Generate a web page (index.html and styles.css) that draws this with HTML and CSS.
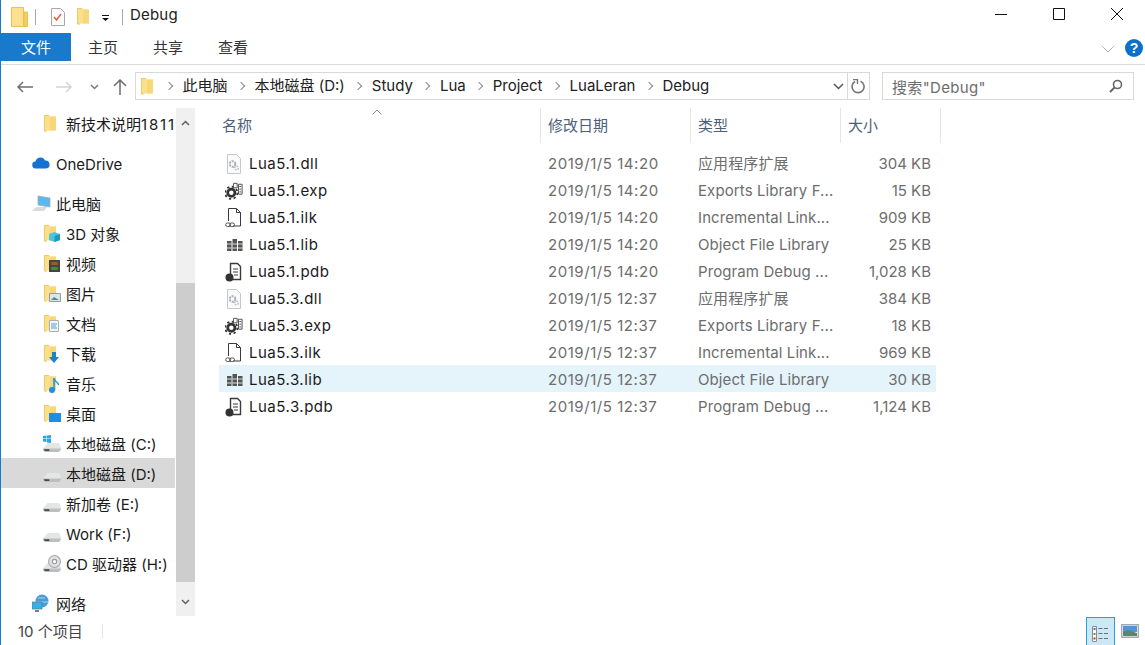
FILE: index.html
```html
<!DOCTYPE html>
<html lang="zh-CN">
<head>
<meta charset="utf-8">
<title>Debug</title>
<link rel="stylesheet" href="styles.css">
</head>
<body>
<svg class="defs" width="0" height="0" aria-hidden="true">
  <defs>
    <symbol id="folder" viewBox="0 0 12 17">
      <path d="M0 0h5l1 1.500h6v14H2.500L0 16z" fill="#fbdf8c"/>
      <path d="M6 1.500h6v14H6z" fill="#f8d67a"/>
      <path d="M0 .5h5M.5 0v15.500" stroke="#eecb6a" fill="none"/>
      <path d="M0 16l2.500 1V15.500L0 15z" fill="#e9c25c"/>
    </symbol>
    <symbol id="drive" viewBox="0 0 20 12">
      <path d="M5 1h13l2 5-2 4H2l-2-3z" fill="#e4e6e6"/>
      <path d="M0 7h20v1L18 11H2L0 9z" fill="#bdbfbf"/>
      <path d="M1 8h6v2H2z" fill="#3f4a4d"/>
    </symbol>
    <symbol id="dll" viewBox="0 0 18 20">
      <path d="M2.500.5h9l4 4v15h-13z" fill="#fafafa" stroke="#c4c8cc"/>
      <circle cx="7.500" cy="10" r="2.800" fill="none" stroke="#a8aeb4" stroke-width="2" stroke-dasharray="2 1"/>
      <circle cx="11.500" cy="14" r="1.800" fill="none" stroke="#b8bcc2" stroke-width="1.500" stroke-dasharray="1.500 1"/>
    </symbol>
    <symbol id="exp" viewBox="0 0 20 20">
      <circle cx="7" cy="12" r="4" fill="none" stroke="#333" stroke-width="3"/>
      <circle cx="7" cy="12" r="6.800" fill="none" stroke="#333" stroke-width="2" stroke-dasharray="2.500 2.800"/>
      <path d="M9.500 1.500h4v5h-4zM15 2.500h4v11h-4z" fill="#fff" stroke="#444"/>
      <path d="M16 5h2M16 8h2M16 11h2" stroke="#444"/>
    </symbol>
    <symbol id="ilk" viewBox="0 0 18 20">
      <path d="M3.500 13V.5h8l4 4v13.500H8" fill="#fff" stroke="#3b3b3b"/>
      <path d="M11.500.5v4h4" fill="none" stroke="#3b3b3b"/>
      <rect x=".7" y="15" width="5" height="3.500" rx="1.700" fill="none" stroke="#555"/>
      <rect x="4.500" y="15" width="5" height="3.500" rx="1.700" fill="none" stroke="#555"/>
    </symbol>
    <symbol id="lib" viewBox="0 0 18 14">
      <path d="M2 3h4.500v10H2zM7.500 1H12v12H7.500zM13 3h4.500v10H13z" fill="#555"/>
      <path d="M2 6h4.500M7.500 6H12M13 6h4.500M2 10h4.500M7.500 10H12M13 10h4.500" stroke="#ddd"/>
    </symbol>
    <symbol id="pdb" viewBox="0 0 18 20">
      <path d="M5.500 1.500h7l3 3v13h-10z" fill="#fff" stroke="#3b3b3b" stroke-width="1.400"/>
      <path d="M8 7h5M8 10h5M9 13h4" stroke="#3b3b3b"/>
      <circle cx="4.500" cy="15.500" r="4" fill="#333"/>
    </symbol>
  </defs>
</svg>
<div class="window">
  <header class="titlebar">
    <svg class="qa-folder" width="17" height="20" viewBox="0 0 17 20"><path d="M.5.500h12v19H.5z" fill="#fbe08f" stroke="#e9c14f"/><path d="M13 5h3.500v14.500H13z" fill="#f4cd66" stroke="#e9c14f"/></svg>
    <span class="qa-sep"></span>
    <svg class="qa-check" width="14" height="18" viewBox="0 0 14 18"><path d="M.5.500h9l4 4v13h-13z" fill="#fdfdfd" stroke="#a8a8a8"/><path d="M3 9l2.500 3L10 6" fill="none" stroke="#e8603c" stroke-width="1.500"/></svg>
    <svg class="qa-small" width="12" height="17"><use href="#folder"/></svg>
    <svg class="qa-drop" width="7" height="6" viewBox="0 0 7 6"><path d="M0 0h7v1H0zM0 3h7L3.500 6z" fill="#111"/></svg>
    <span class="qa-sep qa-sep-second"></span>
    <span class="title">Debug</span>
    <div class="controls">
      <svg width="14" height="14" viewBox="0 0 14 14"><path d="M1 7.500h12" stroke="#111"/></svg>
      <svg width="14" height="14" viewBox="0 0 14 14"><path d="M1.500 1.500h11v11h-11z" fill="none" stroke="#111"/></svg>
      <svg width="14" height="14" viewBox="0 0 14 14"><path d="M1 1l12 12M13 1L1 13" stroke="#111" fill="none"/></svg>
    </div>
  </header>
  <nav class="tabs">
    <span class="tab tab-file">文件</span>
    <span class="tab">主页</span>
    <span class="tab">共享</span>
    <span class="tab">查看</span>
    <svg class="ribbon-toggle" width="14" height="8" viewBox="0 0 14 8"><path d="M1 1l6 6 6-6" fill="none" stroke="#b4b8bd"/></svg>
    <svg class="help" width="18" height="18" viewBox="0 0 18 18"><circle cx="9" cy="9" r="9" fill="#0c6fc9"/><text x="9" y="14" text-anchor="middle" class="help-text">?</text></svg>
  </nav>
  <div class="navbar">
    <svg class="nav-icon nav-back" width="16" height="12" viewBox="0 0 16 12"><path d="M6 1L1 6l5 5M1 6h15" fill="none" stroke="#6e6e6e" stroke-width="1.500"/></svg>
    <svg class="nav-icon nav-forward" width="16" height="12" viewBox="0 0 16 12"><path d="M10 1l5 5-5 5M15 6H0" fill="none" stroke="#d3d3d3" stroke-width="1.500"/></svg>
    <svg class="nav-icon nav-down" width="9" height="6" viewBox="0 0 9 6"><path d="M1 1l3.500 3.500L8 1" fill="none" stroke="#7b7b7b" stroke-width="1.500"/></svg>
    <svg class="nav-icon nav-up" width="14" height="16" viewBox="0 0 14 16"><path d="M1 7l6-6 6 6M7 1v15" fill="none" stroke="#6e6e6e" stroke-width="1.500"/></svg>
    <div class="address">
      <svg class="addr-folder" width="12" height="17"><use href="#folder"/></svg>
      <div class="crumbs">
        <span class="chev"></span><span>此电脑</span>
        <span class="chev"></span><span>本地磁盘 (D:)</span>
        <span class="chev"></span><span>Study</span>
        <span class="chev"></span><span>Lua</span>
        <span class="chev"></span><span>Project</span>
        <span class="chev"></span><span>LuaLeran</span>
        <span class="chev"></span><span>Debug</span>
      </div>
      <svg class="addr-drop" width="11" height="7" viewBox="0 0 11 7"><path d="M1 1l4.500 4.500L10 1" fill="none" stroke="#555" stroke-width="1.500"/></svg>
      <div class="refresh">
        <svg width="15" height="15" viewBox="0 0 15 15"><path d="M9.500 2.200A6 6 0 1 1 4 2.500" fill="none" stroke="#777" stroke-width="1.600"/><path d="M2 .5h4.500V5" fill="none" stroke="#777" stroke-width="1.400"/></svg>
      </div>
    </div>
    <div class="search">
      <span class="search-text">搜索"Debug"</span>
      <svg width="14" height="14" viewBox="0 0 14 14"><circle cx="8.500" cy="5.500" r="4" fill="none" stroke="#666" stroke-width="1.600"/><path d="M5.500 8.500L1 13" stroke="#666" stroke-width="2"/></svg>
    </div>
  </div>
  <div class="body">
    <aside class="sidebar">
      <div class="tree">
        <div class="item lvl2 group-end"><span class="stack"><svg width="12" height="17"><use href="#folder"/></svg></span><span class="clip">新技术说明<span class="num">1811</span></span></div>
        <div class="item lvl1 group-end">
          <svg width="18" height="12" viewBox="0 0 18 12"><path d="M4 11.500a3.500 3.500 0 0 1-.5-7 5 5 0 0 1 9.500-1 4 4 0 0 1 1 8z" fill="#1274d0"/></svg>
          <span class="latin">OneDrive</span>
        </div>
        <div class="item lvl1">
          <svg width="20" height="17" viewBox="0 0 20 17"><path d="M6 1l12 2v9L6 10z" fill="#5cb8f0" stroke="#9aa8b0" stroke-width=".7"/><path d="M0 15l5-3h10l-3 4H2z" fill="#d8dadc"/></svg>
          <span>此电脑</span>
        </div>
        <div class="item lvl2"><span class="stack"><svg width="12" height="17"><use href="#folder"/></svg><svg class="badge badge-low" width="11" height="10" viewBox="0 0 10 10" preserveAspectRatio="none"><path d="M5 0l5 2v6l-5 2-5-2V2z" fill="#4ec4dc"/><path d="M5 4l5-2v6l-5 2z" fill="#1f97c0"/></svg></span><span>3D 对象</span></div>
        <div class="item lvl2"><span class="stack"><svg width="12" height="17"><use href="#folder"/></svg><svg class="badge" width="11" height="12" viewBox="0 0 10 12" preserveAspectRatio="none"><path d="M0 0h10v12H0z" fill="#444"/><path d="M2 2h6v3H2z" fill="#a05a24"/><path d="M2 7h6v3H2z" fill="#4a8a3a"/></svg></span><span>视频</span></div>
        <div class="item lvl2"><span class="stack"><svg width="12" height="17"><use href="#folder"/></svg><svg class="badge badge-wide" width="12" height="9" viewBox="0 0 12 9"><path d="M.5.500h11v8H.5z" fill="#d4e8f0" stroke="#9a9a9a"/><path d="M2 7l3-3 5 3z" fill="#5e8a7a"/></svg></span><span>图片</span></div>
        <div class="item lvl2"><span class="stack"><svg width="12" height="17"><use href="#folder"/></svg><svg class="badge" width="10" height="12" viewBox="0 0 10 12"><path d="M.5.500h9v11h-9z" fill="#f4f4f4" stroke="#a8b0b8"/><path d="M2 4h6M2 6h5M2 8h6" stroke="#4ea0d8"/></svg></span><span>文档</span></div>
        <div class="item lvl2"><span class="stack"><svg width="12" height="17"><use href="#folder"/></svg><svg class="badge badge-low" width="10" height="11" viewBox="0 0 10 11"><path d="M3 0h4v5h3l-5 6-5-6h3z" fill="#1d7fd0"/></svg></span><span>下载</span></div>
        <div class="item lvl2"><span class="stack"><svg width="12" height="17"><use href="#folder"/></svg><svg class="badge badge-high" width="10" height="15" viewBox="0 0 10 15"><path d="M4 1h1.500c0 3 4 3 4 6M5 1v11" fill="none" stroke="#1b93e0" stroke-width="1.500"/><circle cx="3" cy="12" r="3" fill="#1b93e0"/></svg></span><span>音乐</span></div>
        <div class="item lvl2"><span class="stack"><svg width="12" height="17"><use href="#folder"/></svg><svg class="badge badge-wide" width="12" height="9" viewBox="0 0 12 9"><path d="M0 0h12v9H0z" fill="#1b8fe6"/></svg></span><span>桌面</span></div>
        <div class="item lvl2"><span class="stack"><svg class="drive" width="18" height="11"><use href="#drive"/></svg><svg class="win" width="8" height="8" viewBox="0 0 8 8"><path d="M0 1l3.500-.5v3H0zM4 .4L8 0v3.500H4zM0 4h3.500v3L0 6.500zM4 4h4v4l-4-.5z" fill="#2aa3e8"/></svg></span><span>本地磁盘 (C:)</span></div>
        <div class="item lvl2 selected"><span class="stack"><svg class="drive" width="18" height="11"><use href="#drive"/></svg></span><span>本地磁盘 (D:)</span></div>
        <div class="item lvl2"><span class="stack"><svg class="drive" width="18" height="11"><use href="#drive"/></svg></span><span>新加卷 (E:)</span></div>
        <div class="item lvl2"><span class="stack"><svg class="drive" width="18" height="11"><use href="#drive"/></svg></span><span class="latin">Work (F:)</span></div>
        <div class="item lvl2 group-end"><span class="stack"><svg class="drive" width="18" height="11"><use href="#drive"/></svg><svg class="disc" width="13" height="13" viewBox="0 0 12 12"><circle cx="6" cy="6" r="5.500" fill="#dfe3e3" stroke="#a4a8a8"/><circle cx="6" cy="6" r="2" fill="#fff" stroke="#999"/></svg></span><span>CD 驱动器 (H:)</span></div>
        <div class="item lvl1">
          <svg width="18" height="18" viewBox="0 0 18 18"><circle cx="10" cy="7" r="6.500" fill="#4a9cd8"/><path d="M6 4h7M4 8h12" stroke="#a8d4ee"/><path d="M0 8h10v7H0z" fill="#39aee8" stroke="#5a7c90" stroke-width=".7"/><path d="M3 16h4v2H3z" fill="#70828c"/></svg>
          <span>网络</span>
        </div>
      </div>
      <div class="scrollbar">
        <svg class="arrow" width="9" height="6" viewBox="0 0 9 6"><path d="M1 5l3.500-3.500L8 5" fill="none" stroke="#606060" stroke-width="1.500"/></svg>
        <div class="track"></div>
        <div class="thumb"></div>
        <svg class="arrow arrow-bottom" width="9" height="6" viewBox="0 0 9 6"><path d="M1 1l3.500 3.500L8 1" fill="none" stroke="#606060" stroke-width="1.500"/></svg>
      </div>
    </aside>
    <main class="files">
      <div class="head">
        <span class="hcell">名称</span>
        <span class="hcell">修改日期</span>
        <span class="hcell">类型</span>
        <span class="hcell">大小</span>
        <svg class="sort" width="10" height="6" viewBox="0 0 10 6"><path d="M.5 5.500L5 1l4.500 4.500" fill="none" stroke="#8a8a8a"/></svg>
      </div>
      <div class="rows">
        <div class="row"><span class="name"><svg class="fi" width="18" height="20"><use href="#dll"/></svg>Lua5.1.dll</span><span class="date">2019/1/5 14:20</span><span class="type">应用程序扩展</span><span class="size">304 KB</span></div>
        <div class="row"><span class="name"><svg class="fi" width="18" height="20"><use href="#exp"/></svg>Lua5.1.exp</span><span class="date">2019/1/5 14:20</span><span class="type">Exports Library F...</span><span class="size">15 KB</span></div>
        <div class="row"><span class="name"><svg class="fi" width="18" height="20"><use href="#ilk"/></svg>Lua5.1.ilk</span><span class="date">2019/1/5 14:20</span><span class="type">Incremental Link...</span><span class="size">909 KB</span></div>
        <div class="row"><span class="name"><svg class="fi" width="18" height="14"><use href="#lib"/></svg>Lua5.1.lib</span><span class="date">2019/1/5 14:20</span><span class="type">Object File Library</span><span class="size">25 KB</span></div>
        <div class="row"><span class="name"><svg class="fi" width="18" height="20"><use href="#pdb"/></svg>Lua5.1.pdb</span><span class="date">2019/1/5 14:20</span><span class="type">Program Debug ...</span><span class="size">1,028 KB</span></div>
        <div class="row"><span class="name"><svg class="fi" width="18" height="20"><use href="#dll"/></svg>Lua5.3.dll</span><span class="date">2019/1/5 12:37</span><span class="type">应用程序扩展</span><span class="size">384 KB</span></div>
        <div class="row"><span class="name"><svg class="fi" width="18" height="20"><use href="#exp"/></svg>Lua5.3.exp</span><span class="date">2019/1/5 12:37</span><span class="type">Exports Library F...</span><span class="size">18 KB</span></div>
        <div class="row"><span class="name"><svg class="fi" width="18" height="20"><use href="#ilk"/></svg>Lua5.3.ilk</span><span class="date">2019/1/5 12:37</span><span class="type">Incremental Link...</span><span class="size">969 KB</span></div>
        <div class="row row-hover"><span class="name"><svg class="fi" width="18" height="14"><use href="#lib"/></svg>Lua5.3.lib</span><span class="date">2019/1/5 12:37</span><span class="type">Object File Library</span><span class="size">30 KB</span></div>
        <div class="row"><span class="name"><svg class="fi" width="18" height="20"><use href="#pdb"/></svg>Lua5.3.pdb</span><span class="date">2019/1/5 12:37</span><span class="type">Program Debug ...</span><span class="size">1,124 KB</span></div>
      </div>
    </main>
  </div>
  <footer class="status">
    <span class="count">10 个项目</span>
    <span class="status-sep"></span>
    <span class="view view-on">
      <svg width="20" height="21" viewBox="0 0 20 21"><path d="M1.500 2.500h4v15h-4z" fill="#fff" stroke="#8c8c8c"/><path d="M2.500 4h2v2h-2z" fill="#3a7cb8"/><path d="M2.500 9h2v2h-2z" fill="#7a8a3a"/><path d="M2.500 13.500h2v2h-2z" fill="#c03a2a"/><path d="M7.500 4.500h4M13 4.500h4M7.500 9.500h4M13 9.500h4M7.500 14.500h4M13 14.500h4" stroke="#6f6f6f"/></svg>
    </span>
    <svg class="view-large" width="18" height="14" viewBox="0 0 18 14"><path d="M.7.700h16.600v12.600H.7z" fill="#fff" stroke="#a8a8a8" stroke-width="1.400"/><path d="M2 2h14v6H2z" fill="#4f97d8"/><path d="M2 8l5-2 9 3v3H2z" fill="#5c8570"/></svg>
  </footer>
</div>
</body>
</html>
```
FILE: styles.css
```css
* { box-sizing: border-box; }
html, body { margin: 0; padding: 0; height: 100%; overflow: hidden; }
body {
  background: #fff;
  font-family: Inter, "Noto Sans CJK SC", sans-serif;
  font-size: 15px;
  color: #1a1a1a;
}
.defs { display: block; height: 0; }
.window {
  height: 645px;
  border-left: 1px solid #1979ca;
  display: flex;
  flex-direction: column;
}

/* title bar */
.titlebar {
  height: 33px;
  flex: none;
  display: flex;
  align-items: center;
  padding-left: 10px;
}
.qa-sep { width: 1px; height: 16px; background: #a8a8a8; margin: 0 15px 0 7px; }
.qa-check { margin-right: 12px; }
.qa-small { margin-right: 13px; }
.qa-drop { margin-right: 13px; margin-top: 3px; }
.qa-sep-second { margin: 0 7px 0 0; }
.title { font-size: 15px; letter-spacing: .2px; color: #222; line-height: 29px; margin-top: -5px; }
.controls {
  margin-left: auto;
  display: flex;
  gap: 44px;
  padding-right: 21px;
  margin-top: -5px;
}

/* ribbon tabs */
.tabs {
  height: 32px;
  flex: none;
  display: flex;
  align-items: flex-start;
  border-bottom: 1px solid #dadbdc;
}
.tab {
  height: 28px;
  line-height: 30px;
  font-size: 15px;
  padding: 0 18px 0 17px;
  color: #333;
}
.tab-file {
  background: #1979ca;
  color: #fff;
  padding: 0 20px;
  width: 70px;
}
.ribbon-toggle { margin-left: auto; margin-top: 12px; }
.help { margin: 6px 2px 0 10px; }
.help-text { font: bold 14px "Liberation Sans", sans-serif; fill: #fff; }

/* navigation bar */
.navbar {
  height: 43px;
  flex: none;
  display: flex;
  align-items: center;
  padding: 0 10px 1px 16px;
}
.nav-icon { margin-top: 2px; }
.nav-forward { margin-left: 23px; }
.nav-down { margin-left: 18px; }
.nav-up { margin-left: 14px; }
.address {
  margin-left: 8px;
  width: 735px;
  height: 28px;
  border: 1px solid #d9d9d9;
  display: flex;
  align-items: center;
  padding-left: 5px;
}
.addr-folder { flex: none; }
.crumbs {
  display: flex;
  align-items: center;
  gap: 10.500px;
  margin-left: 13px;
  font-size: 15px;
  color: #222;
  line-height: 24px;
}
.chev {
  width: 6px;
  height: 6px;
  border-top: 1.500px solid #8a8a8a;
  border-right: 1.500px solid #8a8a8a;
  transform: rotate(45deg);
}
.addr-drop { margin-left: auto; margin-right: 3px; }
.refresh {
  width: 22px;
  height: 26px;
  border-left: 1px solid #d9d9d9;
  display: flex;
  align-items: center;
  justify-content: center;
}
.search {
  margin-left: 12px;
  width: 252px;
  height: 28px;
  border: 1px solid #d9d9d9;
  display: flex;
  align-items: center;
  justify-content: space-between;
  padding: 0 10px 0 9px;
  font-size: 15px;
  color: #6d6d6d;
}
.search-text { letter-spacing: .35px; }

/* body */
.body {
  flex: 1;
  min-height: 0;
  display: flex;
}
.sidebar {
  width: 194px;
  flex: none;
  display: flex;
  overflow: hidden;
}
.tree { width: 174px; flex: none; }
.item {
  height: 30px;
  display: flex;
  align-items: center;
  white-space: nowrap;
  overflow: hidden;
  color: #1a1a1a;
}
.group-end { margin-bottom: 10px; }
.lvl1 {
  display: grid;
  grid-template-columns: 24px auto;
  justify-content: start;
  align-items: center;
  padding-left: 31px;
}
.lvl2 { padding-left: 43px; }
.clip { overflow: hidden; }
.num { letter-spacing: 1.800px; }
.latin { padding-top: 2px; }
.stack {
  position: relative;
  width: 22px;
  height: 17px;
  flex: none;
}
.stack svg { position: absolute; left: 0; top: 0; }
.stack .badge { left: 5px; top: 5px; }
.stack .badge-wide { left: 5px; top: 8px; }
.stack .badge-low { top: 7px; }
.stack .badge-high { top: 3px; }
.stack .drive { left: -1px; top: 7px; }
.stack .win { left: -1px; top: 0; }
.stack .disc { left: 4px; top: 0; }
.selected { background: #d9d9d9; }
.scrollbar {
  width: 20px;
  flex: none;
  background: #f0f0f0;
  position: relative;
  margin-left: 1px;
  height: 508px;
}
.track { height: 175px; }
.thumb { height: 299px; background: #cdcdcd; }
.arrow { position: absolute; left: 5px; top: 12px; }
.arrow-bottom { top: auto; bottom: 11px; }

/* file list */
.files { flex: 1; padding-left: 24px; min-width: 0; }
.head {
  display: grid;
  grid-template-columns: 322px 150px 150px 100px;
  width: 722px;
  height: 32px;
  position: relative;
  margin-bottom: 9px;
}
.hcell {
  padding-left: 3px;
  border-right: 1px solid #e5e5e5;
  line-height: 35px;
  color: #4c607a;
  font-size: 15px;
}
.hcell + .hcell { padding-left: 7px; }
.sort { position: absolute; left: 153px; top: 1px; }
.row {
  display: grid;
  grid-template-columns: 322px 150px 150px 95px;
  width: 717px;
  height: 27px;
  line-height: 29px;
  white-space: nowrap;
}
.row-hover { background: #e5f3fb; }
.name {
  display: flex;
  align-items: flex-start;
  padding-left: 6px;
  color: #1a1a1a;
  letter-spacing: .5px;
}
.fi { margin-right: 6px; flex: none; align-self: center; }
.date, .type { padding-left: 7px; color: #6d6d6d; }
.date { letter-spacing: .55px; }
.type { letter-spacing: .1px; }
.size { text-align: right; padding-right: 5px; color: #6d6d6d; }

/* status bar */
.status {
  height: 28px;
  flex: none;
  display: flex;
  align-items: center;
  padding-left: 17px;
  color: #444;
  position: relative;
}
.count { margin-top: -2px; }
.status-sep { width: 1px; height: 14px; background: #e6e6e6; margin-left: 19px; }
.view {
  margin-left: auto;
  width: 29px;
  height: 28px;
  background: #cce8f7;
  border: 1px solid #26a0da;
  border-bottom: 0;
  display: flex;
  align-items: flex-start;
  justify-content: center;
  padding-top: 6px;
}
.view-large { margin: 0 6px 0 6px; }
```
